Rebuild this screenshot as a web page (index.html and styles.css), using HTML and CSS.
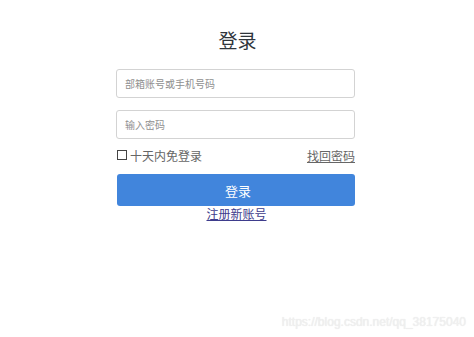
FILE: index.html
```html
<!DOCTYPE html>
<html lang="zh">
<head>
<meta charset="utf-8">
<title>登录</title>
<link rel="stylesheet" href="styles.css">
</head>
<body>
<div class="page">
  <form class="login">
    <h1 class="title">登录</h1>
    <input class="field" type="text" placeholder="部箱账号或手机号码">
    <input class="field field-pwd" type="password" placeholder="输入密码">
    <div class="row">
      <label class="remember"><span class="box"></span>十天内免登录</label>
      <a class="forgot" href="#">找回密码</a>
    </div>
    <button class="submit" type="button">登录</button>
    <a class="register" href="#">注册新账号</a>
  </form>
  <div class="watermark">https://blog.csdn.net/qq_38175040</div>
</div>
</body>
</html>
```

FILE: styles.css
```css
* { box-sizing: border-box; }
html, body { margin: 0; padding: 0; background: #fff; }
body {
  font-family: "Noto Sans CJK SC", "Liberation Sans", sans-serif;
  width: 474px;
  height: 337px;
  overflow: hidden;
}
.page { position: relative; width: 474px; height: 337px; }
.login {
  width: 239px;
  margin: 0 0 0 116px;
  padding-top: 28px;
  display: flex;
  flex-direction: column;
}
.title {
  margin: 0;
  font-size: 19px;
  line-height: 24px;
  font-weight: normal;
  color: #2f353b;
  text-align: center;
  padding-left: 4px;
}
.field {
  margin: 17px 0 0 0;
  height: 29px;
  width: 239px;
  border: 1px solid #d3d3d3;
  border-radius: 3px;
  padding: 0 8px;
  font-family: inherit;
  font-size: 10px;
  color: #333;
  outline: none;
}
.field::placeholder { color: #8f8f8f; }
.field-pwd { margin-top: 12px; }
.row {
  margin-top: 5px;
  height: 22px;
  display: flex;
  align-items: center;
  justify-content: space-between;
  font-size: 12px;
  color: #666;
}
.remember { display: flex; align-items: center; padding-left: 1px; }
.box {
  width: 10px;
  height: 10px;
  border: 1px solid #444;
  margin-right: 3px;
}
.forgot { color: #666; text-decoration: underline; }
.submit {
  margin-top: 8px;
  margin-left: 1px;
  width: 238px;
  height: 32px;
  border: none;
  border-radius: 3px;
  background: #4185dc;
  color: #fff;
  font-family: inherit;
  font-size: 13px;
  padding: 0 0 0 4px;
}
.register {
  align-self: center;
  font-size: 12px;
  line-height: 16px;
  color: #3e3c8c;
  text-decoration: underline;
  padding-left: 2px;
}
.watermark {
  position: absolute;
  right: 8px;
  bottom: 8px;
  font-family: "Liberation Sans", sans-serif;
  font-size: 12px;
  color: #f0f0f0;
  text-shadow: 0 0 1px #e2e2e2;
}
```
